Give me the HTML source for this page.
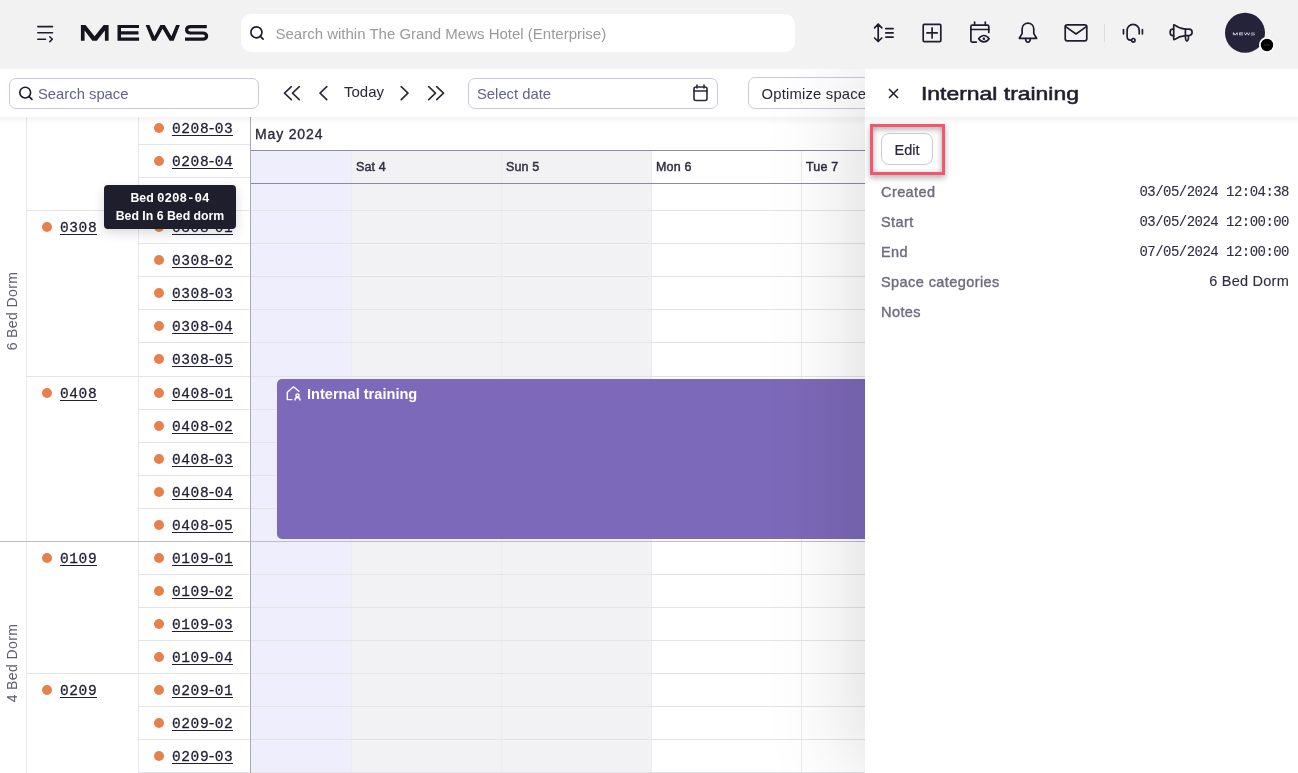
<!DOCTYPE html><html><head><meta charset="utf-8"><style>
*{box-sizing:border-box;margin:0;padding:0}
html,body{width:1298px;height:773px;overflow:hidden;background:#fff;font-family:"Liberation Sans",sans-serif;color:#1c1b2e}
.a{position:absolute}
.inp{position:absolute;border:1px solid #cac8e0;border-radius:7px;background:#fff}
.mono{font-family:"Liberation Mono",monospace}
.dot{position:absolute;width:10px;height:10px;border-radius:50%;background:#e8804b}
.rn{position:absolute;font-family:"Liberation Mono",monospace;font-size:14.5px;letter-spacing:0.6px;color:#1f1e33;-webkit-text-stroke:0.28px #1f1e33;line-height:18px;white-space:nowrap}
.ul{position:absolute;height:1px;background:#1f1e33}
.dh{position:absolute;font-size:12.5px;letter-spacing:0.15px;-webkit-text-stroke:0.45px #2f2e42;color:#2f2e42;line-height:14px;white-space:nowrap}
.lab{position:absolute;left:16px;font-size:14.5px;letter-spacing:0.42px;-webkit-text-stroke:0.4px #6e6d80;color:#6e6d80;line-height:16px;white-space:nowrap}
.val{position:absolute;right:9px;font-family:"Liberation Mono",monospace;font-size:14px;letter-spacing:-0.53px;-webkit-text-stroke:0.1px #2e2d42;color:#2e2d42;line-height:16px;white-space:nowrap;text-align:right}
.val2{position:absolute;right:9px;font-size:14.5px;color:#2e2d42;-webkit-text-stroke:0.12px #2e2d42;letter-spacing:0.25px;line-height:16px;white-space:nowrap;text-align:right}
</style></head><body><div class="a" style="left:0;top:0;width:1298px;height:773px;overflow:hidden;will-change:transform;background:#fff">
<div class="a" style="left:0;top:117px;width:865px;height:656px;overflow:hidden;background:#fff">
<div class="a" style="left:251px;top:33px;width:100px;height:623px;background:#efeefd;"></div>
<div class="a" style="left:351px;top:33px;width:300px;height:623px;background:#f2f2f4;"></div>
<div class="a" style="left:26px;top:0px;width:1px;height:656px;background:#e9e9ec;"></div>
<div class="a" style="left:138px;top:0px;width:1px;height:656px;background:#e9e9ec;"></div>
<div class="a" style="left:351px;top:33px;width:1px;height:623px;background:#ececee;"></div>
<div class="a" style="left:501px;top:33px;width:1px;height:623px;background:#ececee;"></div>
<div class="a" style="left:651px;top:33px;width:1px;height:623px;background:#ececee;"></div>
<div class="a" style="left:801px;top:33px;width:1px;height:623px;background:#ececee;"></div>
<div class="a" style="left:138px;top:27px;width:112px;height:1px;background:#e4e4e8;"></div>
<div class="a" style="left:138px;top:60px;width:112px;height:1px;background:#e4e4e8;"></div>
<div class="a" style="left:27px;top:93px;width:838px;height:1px;background:#e4e4e8;"></div>
<div class="a" style="left:138px;top:126px;width:727px;height:1px;background:#e4e4e8;"></div>
<div class="a" style="left:138px;top:159px;width:727px;height:1px;background:#e4e4e8;"></div>
<div class="a" style="left:138px;top:192px;width:727px;height:1px;background:#e4e4e8;"></div>
<div class="a" style="left:138px;top:225px;width:727px;height:1px;background:#e4e4e8;"></div>
<div class="a" style="left:27px;top:259px;width:838px;height:1px;background:#e4e4e8;"></div>
<div class="a" style="left:138px;top:292px;width:727px;height:1px;background:#e4e4e8;"></div>
<div class="a" style="left:138px;top:325px;width:727px;height:1px;background:#e4e4e8;"></div>
<div class="a" style="left:138px;top:358px;width:727px;height:1px;background:#e4e4e8;"></div>
<div class="a" style="left:138px;top:391px;width:727px;height:1px;background:#e4e4e8;"></div>
<div class="a" style="left:0px;top:424px;width:865px;height:1px;background:#bdbcc7;"></div>
<div class="a" style="left:138px;top:457px;width:727px;height:1px;background:#e4e4e8;"></div>
<div class="a" style="left:138px;top:490px;width:727px;height:1px;background:#e4e4e8;"></div>
<div class="a" style="left:138px;top:523px;width:727px;height:1px;background:#e4e4e8;"></div>
<div class="a" style="left:27px;top:556px;width:838px;height:1px;background:#e4e4e8;"></div>
<div class="a" style="left:138px;top:589px;width:727px;height:1px;background:#e4e4e8;"></div>
<div class="a" style="left:138px;top:622px;width:727px;height:1px;background:#e4e4e8;"></div>
<div class="a" style="left:138px;top:655px;width:727px;height:1px;background:#e4e4e8;"></div>
<div class="a" style="left:251px;top:0px;width:614px;height:33px;background:#fff;"></div>
<div class="a" style="left:250px;top:33px;width:615px;height:1px;background:#8d8c9e;"></div>
<div class="a" style="left:250px;top:66px;width:615px;height:1px;background:#8d8c9e;"></div>
<div class="a" style="left:250px;top:0px;width:1px;height:656px;background:#aaa9b6;"></div>
<div class="a" style="left:255px;top:8px;font-size:14px;color:#2b2a3d;-webkit-text-stroke:0.35px #2b2a3d;line-height:18px;white-space:nowrap;letter-spacing:0.85px">May 2024</div>
<div class="dh" style="left:356px;top:43px">Sat 4</div>
<div class="dh" style="left:506px;top:43px">Sun 5</div>
<div class="dh" style="left:656px;top:43px">Mon 6</div>
<div class="dh" style="left:806px;top:43px">Tue 7</div>
<div class="a" style="left:277px;top:262px;width:600px;height:160px;background:#7c69b9;border-radius:5px"></div>
<svg class="a" style="left:280px;top:263px" width="30" height="26" viewBox="280 380 30 26" fill="none" stroke="#fff" stroke-width="1.45" stroke-linecap="round" stroke-linejoin="round"><path d="M291.9 399.6H287.3V392.2L293.5 386.8L298.9 391.3"/><circle cx="297.5" cy="395.5" r="1.55"/><path d="M295.1 399.9A2.4 2.4 0 0 1 299.9 399.9"/></svg>
<div class="a" style="left:307px;top:269px;font-size:14.6px;font-weight:bold;color:#fff;line-height:16px;white-space:nowrap">Internal training</div>
<div class="dot" style="left:154px;top:6px"></div>
<div class="rn" style="left:172px;top:3.4000000000000057px">0208<span style="margin:0 -1.9px">-</span>03</div>
<div class="ul" style="left:172px;top:18px;width:60.9px"></div>
<div class="dot" style="left:154px;top:39px"></div>
<div class="rn" style="left:172px;top:36.400000000000006px">0208<span style="margin:0 -1.9px">-</span>04</div>
<div class="ul" style="left:172px;top:51px;width:60.9px"></div>
<div class="dot" style="left:154px;top:72px"></div>
<div class="rn" style="left:172px;top:69.4px">0208<span style="margin:0 -1.9px">-</span>05</div>
<div class="ul" style="left:172px;top:84px;width:60.9px"></div>
<div class="dot" style="left:154px;top:105px"></div>
<div class="rn" style="left:172px;top:102.4px">0308<span style="margin:0 -1.9px">-</span>01</div>
<div class="ul" style="left:172px;top:117px;width:60.9px"></div>
<div class="dot" style="left:154px;top:138px"></div>
<div class="rn" style="left:172px;top:135.4px">0308<span style="margin:0 -1.9px">-</span>02</div>
<div class="ul" style="left:172px;top:150px;width:60.9px"></div>
<div class="dot" style="left:154px;top:171px"></div>
<div class="rn" style="left:172px;top:168.39999999999998px">0308<span style="margin:0 -1.9px">-</span>03</div>
<div class="ul" style="left:172px;top:183px;width:60.9px"></div>
<div class="dot" style="left:154px;top:204px"></div>
<div class="rn" style="left:172px;top:201.39999999999998px">0308<span style="margin:0 -1.9px">-</span>04</div>
<div class="ul" style="left:172px;top:216px;width:60.9px"></div>
<div class="dot" style="left:154px;top:237px"></div>
<div class="rn" style="left:172px;top:234.39999999999998px">0308<span style="margin:0 -1.9px">-</span>05</div>
<div class="ul" style="left:172px;top:249px;width:60.9px"></div>
<div class="dot" style="left:154px;top:271px"></div>
<div class="rn" style="left:172px;top:268.4px">0408<span style="margin:0 -1.9px">-</span>01</div>
<div class="ul" style="left:172px;top:283px;width:60.9px"></div>
<div class="dot" style="left:154px;top:304px"></div>
<div class="rn" style="left:172px;top:301.4px">0408<span style="margin:0 -1.9px">-</span>02</div>
<div class="ul" style="left:172px;top:316px;width:60.9px"></div>
<div class="dot" style="left:154px;top:337px"></div>
<div class="rn" style="left:172px;top:334.4px">0408<span style="margin:0 -1.9px">-</span>03</div>
<div class="ul" style="left:172px;top:349px;width:60.9px"></div>
<div class="dot" style="left:154px;top:370px"></div>
<div class="rn" style="left:172px;top:367.4px">0408<span style="margin:0 -1.9px">-</span>04</div>
<div class="ul" style="left:172px;top:382px;width:60.9px"></div>
<div class="dot" style="left:154px;top:403px"></div>
<div class="rn" style="left:172px;top:400.4px">0408<span style="margin:0 -1.9px">-</span>05</div>
<div class="ul" style="left:172px;top:415px;width:60.9px"></div>
<div class="dot" style="left:154px;top:436px"></div>
<div class="rn" style="left:172px;top:433.4px">0109<span style="margin:0 -1.9px">-</span>01</div>
<div class="ul" style="left:172px;top:448px;width:60.9px"></div>
<div class="dot" style="left:154px;top:469px"></div>
<div class="rn" style="left:172px;top:466.4px">0109<span style="margin:0 -1.9px">-</span>02</div>
<div class="ul" style="left:172px;top:481px;width:60.9px"></div>
<div class="dot" style="left:154px;top:502px"></div>
<div class="rn" style="left:172px;top:499.4px">0109<span style="margin:0 -1.9px">-</span>03</div>
<div class="ul" style="left:172px;top:514px;width:60.9px"></div>
<div class="dot" style="left:154px;top:535px"></div>
<div class="rn" style="left:172px;top:532.4px">0109<span style="margin:0 -1.9px">-</span>04</div>
<div class="ul" style="left:172px;top:547px;width:60.9px"></div>
<div class="dot" style="left:154px;top:568px"></div>
<div class="rn" style="left:172px;top:565.4px">0209<span style="margin:0 -1.9px">-</span>01</div>
<div class="ul" style="left:172px;top:580px;width:60.9px"></div>
<div class="dot" style="left:154px;top:601px"></div>
<div class="rn" style="left:172px;top:598.4px">0209<span style="margin:0 -1.9px">-</span>02</div>
<div class="ul" style="left:172px;top:613px;width:60.9px"></div>
<div class="dot" style="left:154px;top:634px"></div>
<div class="rn" style="left:172px;top:631.4px">0209<span style="margin:0 -1.9px">-</span>03</div>
<div class="ul" style="left:172px;top:646px;width:60.9px"></div>
<div class="dot" style="left:42px;top:105px"></div>
<div class="rn" style="left:60px;top:102.4px">0308</div>
<div class="ul" style="left:60px;top:117px;width:36.7px"></div>
<div class="dot" style="left:42px;top:271px"></div>
<div class="rn" style="left:60px;top:268.4px">0408</div>
<div class="ul" style="left:60px;top:283px;width:36.7px"></div>
<div class="dot" style="left:42px;top:436px"></div>
<div class="rn" style="left:60px;top:433.4px">0109</div>
<div class="ul" style="left:60px;top:448px;width:36.7px"></div>
<div class="dot" style="left:42px;top:568px"></div>
<div class="rn" style="left:60px;top:565.4px">0209</div>
<div class="ul" style="left:60px;top:580px;width:36.7px"></div>
<div class="a" style="left:4px;top:194px;width:16px;height:0"><div style="position:absolute;left:0;top:0;transform:translate(-50%,-50%) rotate(-90deg);transform-origin:center;white-space:nowrap;font-size:14px;letter-spacing:0.4px;color:#5d5c6f;line-height:16px;margin-left:8px">6 Bed Dorm</div></div>
<div class="a" style="left:4px;top:546px;width:16px;height:0"><div style="position:absolute;left:0;top:0;transform:translate(-50%,-50%) rotate(-90deg);transform-origin:center;white-space:nowrap;font-size:14px;letter-spacing:0.4px;color:#5d5c6f;line-height:16px;margin-left:8px">4 Bed Dorm</div></div>
<div class="a" style="left:0;top:0;width:865px;height:8px;background:linear-gradient(rgba(0,0,0,0.045),rgba(0,0,0,0))"></div>
</div>
<div class="a" style="left:104px;top:185px;width:132px;height:44px;background:#1e1e2d;border-radius:4px;box-shadow:0 4px 12px rgba(0,0,0,0.15);color:#fff;font-size:12.3px;font-weight:bold;text-align:center;line-height:17.5px;padding-top:4.5px">Bed <span class="mono" style="font-size:12.5px">0208-04</span><br>Bed In 6 Bed dorm</div>
<div class="a" style="left:0;top:69px;width:865px;height:48px;background:#fff"></div>
<div class="inp" style="left:9px;top:78px;width:250px;height:31px"></div>
<svg class="a" style="left:12px;top:80px" width="25" height="25" viewBox="12 80 25 25" fill="none" stroke="#1c1b2e" stroke-width="1.65" stroke-linecap="round"><circle cx="25.2" cy="92.6" r="5.4"/><path d="M29.1 96.6L32 99.4"/></svg>
<div class="a" style="left:38px;top:86px;font-size:14.8px;color:#62618a;line-height:17px;white-space:nowrap">Search space</div>
<svg class="a" style="left:282px;top:84px" width="20" height="18" viewBox="0 0 20 18" fill="none" stroke="#2a2938" stroke-width="1.6" stroke-linecap="round" stroke-linejoin="round"><path d="M9.3 2.6L2.5 9.1L9.3 15.6M17.3 2.6L10.5 9.1L17.3 15.6"/></svg>
<svg class="a" style="left:316.5px;top:84px" width="13" height="18" viewBox="0 0 13 18" fill="none" stroke="#2a2938" stroke-width="1.6" stroke-linecap="round" stroke-linejoin="round"><path d="M9.8 2.6L3 9.1L9.8 15.6"/></svg>
<div class="a" style="left:344px;top:83px;font-size:15px;color:#2a2938;line-height:18px;white-space:nowrap">Today</div>
<svg class="a" style="left:398px;top:84px" width="13" height="18" viewBox="0 0 13 18" fill="none" stroke="#2a2938" stroke-width="1.6" stroke-linecap="round" stroke-linejoin="round"><path d="M3.2 2.6L10 9.1L3.2 15.6"/></svg>
<svg class="a" style="left:426px;top:84px" width="20" height="18" viewBox="0 0 20 18" fill="none" stroke="#2a2938" stroke-width="1.6" stroke-linecap="round" stroke-linejoin="round"><path d="M2.7 2.6L9.5 9.1L2.7 15.6M10.7 2.6L17.5 9.1L10.7 15.6"/></svg>
<div class="inp" style="left:468px;top:78px;width:250px;height:31px"></div>
<div class="a" style="left:477px;top:86px;font-size:14.8px;color:#62618a;line-height:17px;white-space:nowrap">Select date</div>
<svg class="a" style="left:692px;top:84px" width="17" height="18" viewBox="0 0 17 18" fill="none" stroke="#2a2938" stroke-width="1.6" stroke-linecap="round" stroke-linejoin="round"><rect x="2" y="3" width="13" height="13.5" rx="2"/><path d="M2 7H15M5 1V4M12 1V4"/></svg>
<div class="inp" style="left:748px;top:77px;width:160px;height:32px"></div>
<div class="a" style="left:761.5px;top:86px;font-size:14.8px;letter-spacing:0.2px;color:#2a2938;line-height:17px;white-space:nowrap">Optimize space</div>
<div class="a" style="left:865px;top:69px;width:433px;height:704px;background:#fff;box-shadow:-4px 0 90px rgba(0,0,0,0.155)">
<svg class="a" style="left:23px;top:19px" width="11" height="11" viewBox="0 0 11 11" fill="none" stroke="#1c1b2e" stroke-width="1.5"><path d="M1 1L10 10M10 1L1 10"/></svg>
<div class="a" style="left:56px;top:13px;font-size:18.6px;color:#1f1e2e;-webkit-text-stroke:0.55px #1f1e2e;transform:scaleX(1.232);transform-origin:0 0;line-height:23px;white-space:nowrap">Internal training</div>
<div class="a" style="left:0;top:48px;width:433px;height:8px;background:linear-gradient(rgba(0,0,0,0.05),rgba(0,0,0,0))"></div>
<div class="a" style="left:5px;top:55px;width:75px;height:51px;border:3px solid #f4566d;box-shadow:0 3px 6px rgba(0,0,0,0.3),inset 0 2px 6px rgba(0,0,0,0.34)"></div>
<div class="a" style="left:16px;top:64px;width:52px;height:32px;border:1px solid #cac8e0;border-radius:8px;background:#fff;font-size:14.5px;color:#2a2938;-webkit-text-stroke:0.2px #2a2938;line-height:32px;text-align:center">Edit</div>
<div class="lab" style="top:114.6px">Created</div>
<div class="lab" style="top:144.6px">Start</div>
<div class="lab" style="top:174.6px">End</div>
<div class="lab" style="top:204.60000000000002px">Space categories</div>
<div class="lab" style="top:234.60000000000002px">Notes</div>
<div class="val" style="top:115px">03/05/2024 12:04:38</div>
<div class="val" style="top:145px">03/05/2024 12:00:00</div>
<div class="val" style="top:175px">07/05/2024 12:00:00</div>
<div class="val2" style="top:204px">6 Bed Dorm</div>
</div>
<div class="a" style="left:0;top:0;width:1298px;height:69px;background:#f2f2f2"></div>
<svg class="a" style="left:30px;top:20px" width="30" height="28" viewBox="30 20 30 28" fill="none" stroke="#1f1e2e" stroke-width="1.55" stroke-linecap="round" stroke-linejoin="round"><path d="M37.8 26.6H52.5M37.8 32.8H52.5M37.8 39.2H45.5M49.8 36.8L52.3 39.2L49.8 41.6"/></svg>
<svg class="a" style="left:0;top:0" width="220" height="60" viewBox="0 0 220 60" fill="#15141f" stroke="#15141f" stroke-width="0"><polygon points="80.9,25 85.5,25 94.6,36.2 103.7,25 108.6,25 108.6,40.8 104.9,40.8 104.9,30.5 96.8,40.8 92.4,40.8 84.6,30.5 84.6,40.8 80.9,40.8"/><path d="M117.5 25H139V28.1H121V31.3H138.5V34.5H121V37.6H139.1V40.8H117.5Z"/><polygon points="145.6,25 149.4,25 154.4,36.3 160.4,25 164.8,25 171.4,36.3 176.1,25 179.9,25 173.7,40.8 169.6,40.8 162.6,28.8 155.9,40.8 152.1,40.8"/><path d="M206.8 26.6H190.5C187 26.6 186.6 28.6 186.6 29.8C186.6 31.8 187.6 33 190.5 33H202.5C206 33 206.6 34.6 206.6 36.1C206.6 38 205.6 39.2 202.5 39.2H185" fill="none" stroke-width="3.2"/></svg>
<div class="a" style="left:241px;top:14px;width:554px;height:38px;background:#fff;border-radius:10px"></div>
<svg class="a" style="left:245px;top:20px" width="25" height="25" viewBox="245 20 25 25" fill="none" stroke="#1c1b2e" stroke-width="1.65" stroke-linecap="round"><circle cx="256.4" cy="32.3" r="5.5"/><path d="M260.4 36.4L263.1 39.1"/></svg>
<div class="a" style="left:275.5px;top:24.6px;font-size:15px;color:#9a9a9a;line-height:17px;white-space:nowrap">Search within The Grand Mews Hotel (Enterprise)</div>
<svg class="a" style="left:0;top:0" width="1298" height="69" viewBox="0 0 1298 69" fill="none" stroke="#1f1e2e" stroke-width="1.7" stroke-linecap="round" stroke-linejoin="round"><path d="M878.2 24V41.5M874.6 27.8L878.2 24L881.8 27.8M874.6 38L878.2 41.5L881.8 38"/><path d="M885.9 28.6H893M885.9 32.9H893M885.9 37.1H893" stroke-width="1.9"/><rect x="923.2" y="24.3" width="17.6" height="17.3" rx="1"/><path d="M927 32.9H937.2M932.1 27.9V37.9"/><path d="M974.6 22V25M985.3 22V25"/><path d="M976.3 42.1H972.2Q970.9 42.1 970.9 40.8V26.4Q970.9 25.1 972.2 25.1H987.5Q988.8 25.1 988.8 26.4V32.4"/><path d="M970.9 29.5H988.8"/><path d="M978.7 38.7C980.6 35.9 982 35.5 983.9 35.5C985.8 35.5 987.2 35.9 989.1 38.7C987.2 41.5 985.8 41.9 983.9 41.9C982 41.9 980.6 41.5 978.7 38.7Z"/><circle cx="983.9" cy="38.7" r="1.3" fill="#1f1e2e" stroke="none"/><path d="M1019.3 38.3H1036.6L1033.8 33.6V28.9A5.85 5.85 0 0 0 1022.1 28.9V33.6Z"/><path d="M1025.6 38.6Q1025.6 42.2 1027.95 42.2Q1030.3 42.2 1030.3 38.6"/><rect x="1065.2" y="24.9" width="21.6" height="15.9" rx="2"/><path d="M1065.6 26.6L1076 34L1086.4 26.6"/><path d="M1123.5 29.6V33.8M1142.4 29.6V33.8"/><path d="M1139.2 33.8V30.4A6.05 6.05 0 0 0 1127.1 30.4V36.6Q1127.1 40.2 1130.6 40.2"/><circle cx="1133.3" cy="40.2" r="1.7"/><path d="M1173.7 29H1172.9Q1170.1 29 1170.1 32.35Q1170.1 35.7 1172.9 35.7H1173.7"/><path d="M1173.7 25.6Q1173.7 24.4 1174.8 25.1Q1179 28.4 1185.4 29.1V35.6Q1179 36.3 1174.8 39.4Q1173.7 40.1 1173.7 38.9Z"/><path d="M1185.4 29.1H1188.9Q1192.1 29.1 1192.1 32.35Q1192.1 35.6 1188.9 35.6H1185.4"/><path d="M1185.4 36Q1185.4 40.9 1186.95 40.9Q1188.5 40.9 1188.5 36"/></svg>
<div class="a" style="left:1104px;top:24px;width:1px;height:18px;background:#dcdbe8"></div>
<svg class="a" style="left:0;top:0" width="1298" height="69" viewBox="0 0 1298 69"><circle cx="1245" cy="32.8" r="20" fill="#24233a"/><g transform="translate(1218.9 28.3) scale(0.1728)" fill="#e8e8ee" stroke="#e8e8ee" stroke-width="0"><polygon points="80.9,25 85.5,25 94.6,36.2 103.7,25 108.6,25 108.6,40.8 104.9,40.8 104.9,30.5 96.8,40.8 92.4,40.8 84.6,30.5 84.6,40.8 80.9,40.8"/><path d="M117.5 25H139V28.1H121V31.3H138.5V34.5H121V37.6H139.1V40.8H117.5Z"/><polygon points="145.6,25 149.4,25 154.4,36.3 160.4,25 164.8,25 171.4,36.3 176.1,25 179.9,25 173.7,40.8 169.6,40.8 162.6,28.8 155.9,40.8 152.1,40.8"/><path d="M206.8 26.6H190.5C187 26.6 186.6 28.6 186.6 29.8C186.6 31.8 187.6 33 190.5 33H202.5C206 33 206.6 34.6 206.6 36.1C206.6 38 205.6 39.2 202.5 39.2H185" fill="none" stroke-width="3.2"/></g><circle cx="1267" cy="45" r="7.1" fill="#000" stroke="#fff" stroke-width="1.8"/><path d="M1264.2 45H1269.8" stroke="#3a3a3a" stroke-width="0.8"/></svg>
</div></body></html>
